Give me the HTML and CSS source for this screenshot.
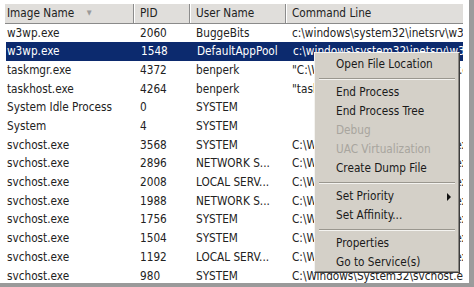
FILE: index.html
```html
<!DOCTYPE html>
<html>
<head>
<meta charset="utf-8">
<link rel="stylesheet" href="styles.css">
</head>
<body>
<div class="frame">
  <div class="list">
    <div class="row head">
      <div class="cell c1">Image Name <span class="sort">&#9660;</span></div>
      <div class="cell c2">PID</div>
      <div class="cell c3">User Name</div>
      <div class="cell c4">Command Line</div>
    </div>
    <div class="row"><div class="cell c1">w3wp.exe</div><div class="cell c2">2060</div><div class="cell c3">BuggeBits</div><div class="cell c4">c:\windows\system32\inetsrv\w3wp.exe -ap "BuggeBits"</div></div>
    <div class="row sel"><div class="cell c1">w3wp.exe</div><div class="cell c2">1548</div><div class="cell c3">DefaultAppPool</div><div class="cell c4">c:\windows\system32\inetsrv\w3wp.exe -ap "DefaultAppPool"</div></div>
    <div class="row"><div class="cell c1">taskmgr.exe</div><div class="cell c2">4372</div><div class="cell c3">benperk</div><div class="cell c4">"C:\Windows\system32\taskmgr.exe" /4</div></div>
    <div class="row"><div class="cell c1">taskhost.exe</div><div class="cell c2">4264</div><div class="cell c3">benperk</div><div class="cell c4">"taskhost.exe"</div></div>
    <div class="row"><div class="cell c1">System Idle Process</div><div class="cell c2">0</div><div class="cell c3">SYSTEM</div><div class="cell c4"></div></div>
    <div class="row"><div class="cell c1">System</div><div class="cell c2">4</div><div class="cell c3">SYSTEM</div><div class="cell c4"></div></div>
    <div class="row"><div class="cell c1">svchost.exe</div><div class="cell c2">3568</div><div class="cell c3">SYSTEM</div><div class="cell c4">C:\Windows\system32\svchost.exe -k netsvcs</div></div>
    <div class="row"><div class="cell c1">svchost.exe</div><div class="cell c2">2896</div><div class="cell c3">NETWORK S...</div><div class="cell c4">C:\Windows\system32\svchost.exe -k NetworkService</div></div>
    <div class="row"><div class="cell c1">svchost.exe</div><div class="cell c2">2008</div><div class="cell c3">LOCAL SERV...</div><div class="cell c4">C:\Windows\system32\svchost.exe -k LocalService</div></div>
    <div class="row"><div class="cell c1">svchost.exe</div><div class="cell c2">1988</div><div class="cell c3">NETWORK S...</div><div class="cell c4">C:\Windows\system32\svchost.exe -k RPCSS</div></div>
    <div class="row"><div class="cell c1">svchost.exe</div><div class="cell c2">1756</div><div class="cell c3">SYSTEM</div><div class="cell c4">C:\Windows\system32\svchost.exe -k LocalSystem</div></div>
    <div class="row"><div class="cell c1">svchost.exe</div><div class="cell c2">1504</div><div class="cell c3">SYSTEM</div><div class="cell c4">C:\Windows\system32\svchost.exe -k DcomLaunch</div></div>
    <div class="row"><div class="cell c1">svchost.exe</div><div class="cell c2">1192</div><div class="cell c3">LOCAL SERV...</div><div class="cell c4">C:\Windows\system32\svchost.exe -k LocalServiceNetworkRestricted</div></div>
    <div class="row"><div class="cell c1">svchost.exe</div><div class="cell c2">980</div><div class="cell c3">SYSTEM</div><div class="cell c4">C:\Windows\System32\svchost.exe -k termsvcs</div></div>
  </div>

  <div class="menu">
    <div class="item">Open File Location</div>
    <div class="sep"></div>
    <div class="item">End Process</div>
    <div class="item">End Process Tree</div>
    <div class="item off">Debug</div>
    <div class="item off">UAC Virtualization</div>
    <div class="item">Create Dump File</div>
    <div class="sep"></div>
    <div class="item">Set Priority <span class="arrow"></span></div>
    <div class="item">Set Affinity...</div>
    <div class="sep"></div>
    <div class="item">Properties</div>
    <div class="item">Go to Service(s)</div>
  </div>
</div>
</body>
</html>
```

FILE: styles.css
```css
html, body {
  margin: 0;
  padding: 0;
  background: #ffffff;
}
body {
  width: 474px;
  height: 287px;
  overflow: hidden;
  font-family: "DejaVu Sans Condensed", "DejaVu Sans", sans-serif;
  font-size: 11.7px;
  color: #222222;
}
.frame {
  position: relative;
  width: 474px;
  height: 287px;
  box-sizing: border-box;
  padding: 4px 5px 0 5px;
  border-right: 5px solid #9c9c9c;
  border-bottom: 4px solid #9a9a9a;
  overflow: hidden;
}
.list {
  width: 458px;
}
.row {
  display: grid;
  grid-template-columns: 128px 56px 96px 178px;
  height: 18.7px;
  align-items: center;
  white-space: nowrap;
}
.cell {
  overflow: hidden;
  padding-left: 7px;
  line-height: 18.7px;
}
.cell.c1 {
  padding-left: 2px;
}
.head {
  height: 19.6px;
  box-sizing: border-box;
  background: #e0dedb;
  border-bottom: 1px solid #8a8a8a;
}
.head .cell {
  line-height: 18px;
  height: 18.6px;
  box-sizing: border-box;
}
.head .c2, .head .c3, .head .c4 {
  border-left: 1px solid #8c8c8c;
  box-shadow: inset 1px 0 0 #ffffff;
  padding-left: 6px;
}
.sort {
  color: #9a9a9a;
  font-size: 7px;
  margin-left: 9px;
  vertical-align: 2px;
}
.sel {
  background: #0c2a6e;
  color: #ffffff;
  margin-left: 1px;
}
.sel .c1 {
  padding-left: 1px;
}
.menu {
  position: absolute;
  left: 314px;
  top: 52px;
  width: 146px;
  box-sizing: border-box;
  padding: 2px 0 0 0;
  background: #d4d0c8;
  border: 1px solid;
  border-color: #f4f3f0 #3c3c3c #3c3c3c #f4f3f0;
  box-shadow: inset -1px -1px 0 #8a8782;
  color: #1a1a1a;
}
.item {
  position: relative;
  height: 19px;
  line-height: 19px;
  padding-left: 21px;
  white-space: nowrap;
}
.item.off {
  color: #a8a59e;
}
.sep {
  height: 9px;
  margin: 0 4px;
  position: relative;
}
.sep::before {
  content: "";
  position: absolute;
  left: 0;
  right: 0;
  top: 4px;
  height: 1px;
  background: #9a978f;
  box-shadow: 0 1px 0 #f4f3f0;
}
.arrow {
  position: absolute;
  left: 132px;
  top: 6px;
  width: 0;
  height: 0;
  border-top: 4px solid transparent;
  border-bottom: 4px solid transparent;
  border-left: 4px solid #111111;
}
```
